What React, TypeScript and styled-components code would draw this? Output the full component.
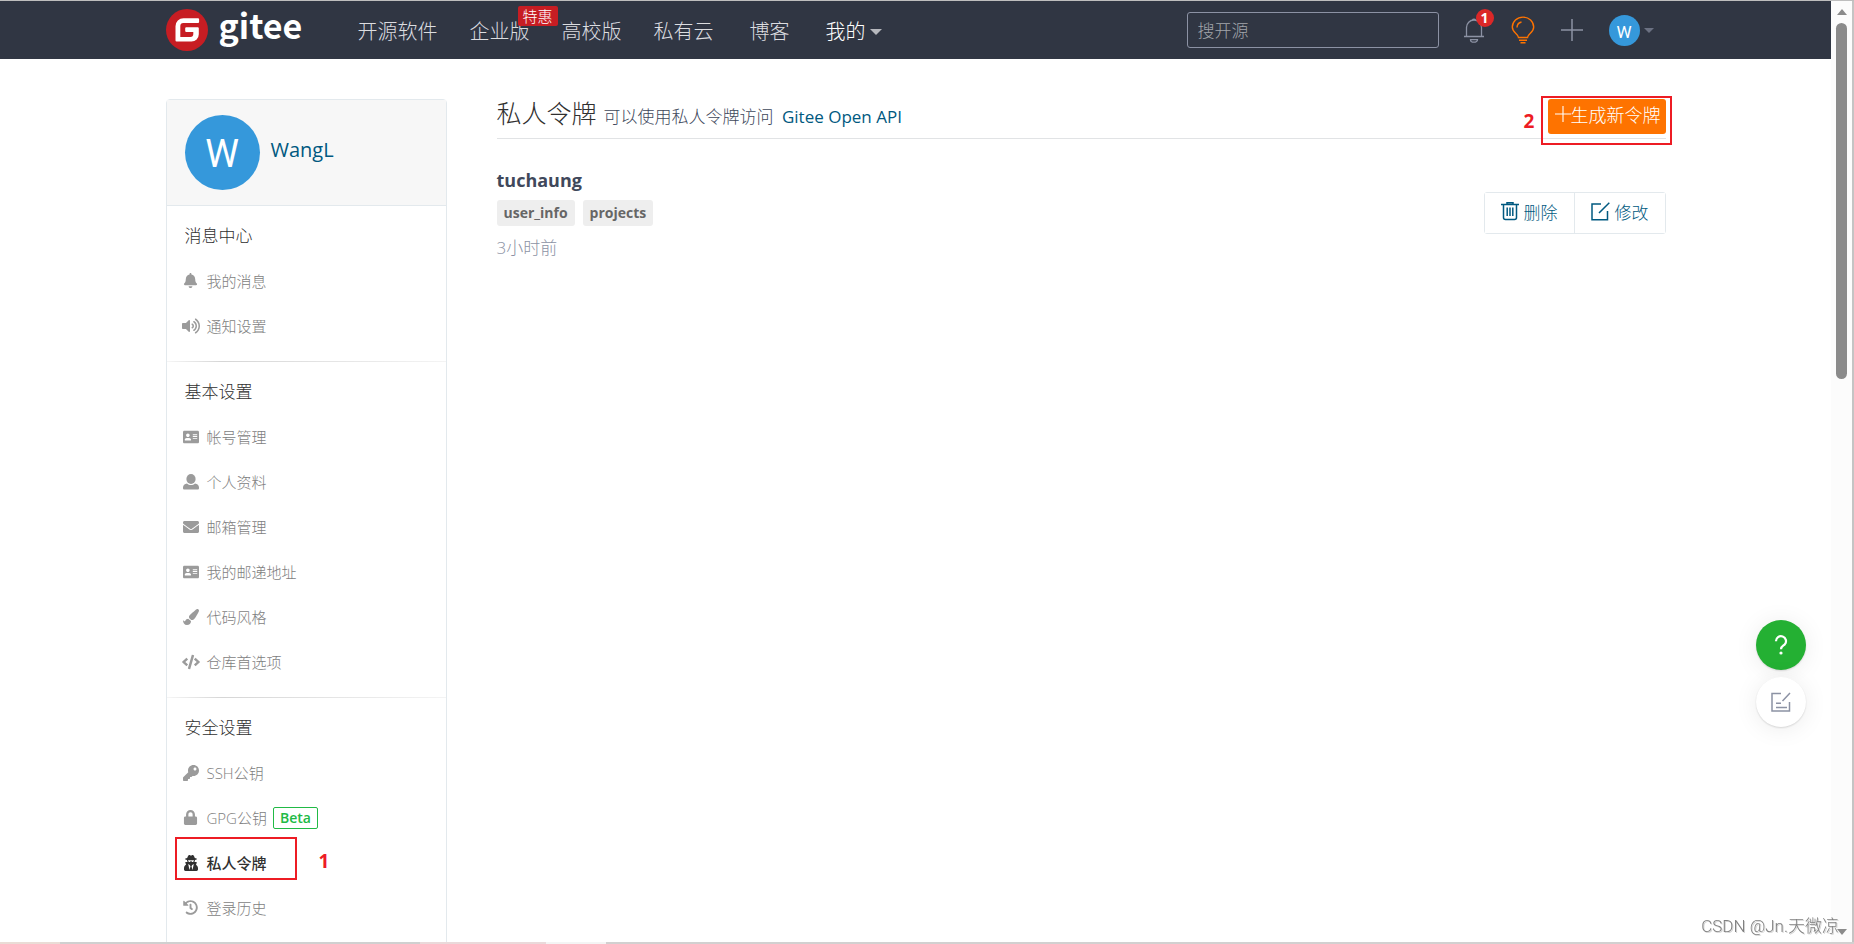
import React from 'react';
import styled, { createGlobalStyle } from 'styled-components';
import {
  FaAddressCard,
  FaBell,
  FaCode,
  FaEnvelope,
  FaHistory,
  FaKey,
  FaLock,
  FaPaintBrush,
  FaUserSecret,
  FaVolumeUp,
} from 'react-icons/fa';

const fontStack = "'Open Sans', 'Noto Sans CJK SC', sans-serif";

const GlobalStyle = createGlobalStyle`
  *, *::before, *::after { box-sizing: border-box; }
  body {
    margin: 0;
    background: #fff;
    color: #40485b;
    font-family: ${fontStack};
    font-size: 17px;
    font-weight: 300;
    overflow: hidden;
  }
  a { color: inherit; text-decoration: none; }
  button { font: inherit; cursor: pointer; }
  h1, h2, h3, p, ul { margin: 0; padding: 0; font-weight: inherit; }
  ul { list-style: none; }
`;

const Frame = styled.div`
  height: 100vh;
  display: flex;
  flex-direction: column;
  border-top: 1px solid #bebebe;
`;

const Viewport = styled.div`
  flex: 1;
  min-height: 0;
  display: flex;
`;

const Page = styled.div`
  flex: 1;
  min-width: 0;
  overflow: hidden;
`;

const Container = styled.div`
  max-width: 1500px;
  margin: 0 auto;
`;

const Header = styled.header`
  background: #303643;
`;

const HeaderRow = styled(Container)`
  display: flex;
  align-items: center;
  height: 58px;
`;

const Logo = styled.a`
  display: flex;
  align-items: center;
  gap: 11px;
  width: 192px;
  color: #fff;
  font-family: 'Noto Sans CJK SC', sans-serif;
  font-size: 34px;
  font-weight: 700;
  line-height: 50px;
`;

const LogoName = styled.span`
  padding-bottom: 10px;
`;

const Nav = styled.nav`
  flex: 1;
  display: flex;
  gap: 32px;
  padding-top: 3px;
`;

const NavLink = styled.a<{ $active?: boolean; $spaced?: boolean }>`
  position: relative;
  display: flex;
  align-items: center;
  gap: 4px;
  margin-left: ${(p) => (p.$spaced ? 4 : 0)}px;
  font-size: 20px;
  line-height: 30px;
  color: ${(p) => (p.$active ? '#fff' : '#dcdde0')};
`;

const Caret = styled.span<{ $size: number }>`
  border: ${(p) => p.$size}px solid transparent;
  border-top-color: currentColor;
  border-bottom: 0;
  opacity: 0.65;
`;

const Promo = styled.span`
  position: absolute;
  top: -11px;
  right: -28px;
  width: 40px;
  border-radius: 2px;
  background: #c71d23;
  color: #fff;
  font-size: 15px;
  line-height: 20px;
  text-align: center;
`;

const Search = styled.input`
  width: 252px;
  height: 36px;
  padding: 0 10px;
  border: 1px solid #8c92a4;
  border-radius: 3px;
  background: transparent;
  color: #fff;
  font: inherit;
  &::placeholder { color: #a2a5ab; opacity: 1; }
`;

const Tools = styled.div`
  display: flex;
  align-items: center;
  gap: 26px;
  margin-left: 24px;
  padding-right: 12px;
`;

const ToolButton = styled.button`
  position: relative;
  display: flex;
  align-items: center;
  gap: 4px;
  padding: 0;
  border: 0;
  background: none;
  color: #8c92a4;
`;

const Count = styled.span`
  position: absolute;
  top: -8px;
  right: -9px;
  width: 18px;
  height: 18px;
  border-radius: 50%;
  background: #db2828;
  color: #fff;
  font-size: 14px;
  font-weight: 700;
  line-height: 18px;
`;

const Avatar = styled.span<{ $size: number; $font: number }>`
  display: block;
  width: ${(p) => p.$size}px;
  height: ${(p) => p.$size}px;
  border-radius: 50%;
  background: #3598db;
  color: #fff;
  font-family: Roboto, 'Liberation Sans', sans-serif;
  font-size: ${(p) => p.$font}px;
  font-weight: 400;
  line-height: ${(p) => p.$size + 4}px;
  text-align: center;
`;

const Columns = styled(Container)`
  display: flex;
  align-items: flex-start;
  gap: 50px;
  padding-top: 40px;
`;

const Sidebar = styled.aside`
  width: 281px;
  min-height: 900px;
  border: 1px solid #e3e9ed;
  border-radius: 4px;
`;

const Profile = styled.div`
  display: flex;
  gap: 11px;
  padding: 15px 18px;
  border-bottom: 1px solid #e3e9ed;
  background: #f7f7f7;
`;

const ProfileName = styled.a`
  padding-top: 20px;
  color: #005980;
  font-size: 20px;
  font-weight: 400;
  line-height: 30px;
`;

const MenuSection = styled.section`
  padding: 7px 0 13px;
  & + & {
    border-top: 1px solid;
    border-image: linear-gradient(90deg, #f6f6f6, #d6d6d6 20%, #f4f4f4) 1;
  }
`;

const MenuTitle = styled.h2`
  padding-left: 18px;
  color: #303030;
  font-size: 17px;
  line-height: 45px;
`;

const MenuLink = styled.a<{ $active?: boolean }>`
  display: flex;
  align-items: center;
  height: 45px;
  padding-left: 14px;
  color: ${(p) => (p.$active ? '#303030' : '#7e7e7e')};
  font-size: 15px;
  font-weight: ${(p) => (p.$active ? 500 : 300)};
`;

const MenuIcon = styled.span<{ $active?: boolean }>`
  display: flex;
  justify-content: center;
  width: 20px;
  margin-right: 6px;
  color: ${(p) => (p.$active ? '#303030' : '#9b9b9b')};
`;

const Beta = styled.span`
  margin-left: 6px;
  padding: 0 6px;
  border: 1px solid #21ba45;
  border-radius: 2px;
  color: #21ba45;
  font-size: 14px;
  font-weight: 600;
  line-height: 20px;
`;

const Main = styled.main`
  flex: 1;
  min-width: 0;
`;

const TitleBar = styled.div`
  display: flex;
  align-items: flex-start;
  justify-content: space-between;
  height: 40px;
  border-bottom: 1px solid #e1e3e5;
`;

const Title = styled.h1`
  display: flex;
  align-items: baseline;
  gap: 7px;
  color: #303030;
  font-size: 25px;
  line-height: 28px;
`;

const Subtitle = styled.span`
  color: #40485b;
  font-size: 17px;
`;

const TextLink = styled.a`
  margin-left: 4px;
  color: #005980;
  font-weight: 400;
`;

const CreateButton = styled.button`
  display: flex;
  align-items: center;
  height: 35px;
  padding: 0 5px 6px 7px;
  border: 0;
  border-radius: 3px;
  background: #fe7300;
  color: #fff;
  font-size: 18px;
`;

const TokenRow = styled.article`
  display: flex;
  align-items: flex-start;
  justify-content: space-between;
  padding-top: 27px;
`;

const TokenName = styled.h3`
  color: #40485b;
  font-size: 18px;
  font-weight: 700;
  line-height: 28px;
`;

const Scopes = styled.ul`
  display: flex;
  gap: 8px;
  margin: 6px 0 8px;
`;

const Scope = styled.li`
  padding: 0 7px;
  border-radius: 3px;
  background: #eee;
  color: #666;
  font-size: 14px;
  font-weight: 700;
  line-height: 26px;
`;

const TokenTime = styled.p`
  color: #8c92a4;
  line-height: 28px;
`;

const Actions = styled.div`
  display: flex;
  margin-top: 26px;
  border: 1px solid #e3e9ed;
  border-radius: 3px;
`;

const ActionButton = styled.button`
  display: flex;
  align-items: center;
  gap: 5px;
  height: 40px;
  padding: 0 16px 4px;
  border: 0;
  background: #fff;
  color: #005980;
  & + & { border-left: 1px solid #e3e9ed; }
`;

const ScrollTrack = styled.div`
  display: flex;
  flex-direction: column;
  align-items: center;
  justify-content: space-between;
  width: 23px;
  padding: 8px 4px 7px 4px;
  border-right: 2px solid #c4c4c4;
  background: #fcfcfc;
`;

const ScrollTop = styled.div`
  display: flex;
  flex-direction: column;
  align-items: center;
  gap: 8px;
  height: 40%;
`;

const ScrollThumb = styled.div`
  flex: 1;
  width: 11px;
  border-radius: 6px;
  background: #8b8b8b;
`;

const ScrollArrow = styled.span<{ $down?: boolean }>`
  border: 5px solid transparent;
  border-top: ${(p) => (p.$down ? '6px solid #8b8b8b' : '0')};
  border-bottom: ${(p) => (p.$down ? '0' : '6px solid #8b8b8b')};
`;

const WindowEdge = styled.div`
  flex: none;
  display: grid;
  grid-template-columns: 60px 360px 126px 60px 1fr;
  height: 2px;
  background: #ccc;
`;

const EdgePart = styled.span<{ $color: string }>`
  background: ${(p) => p.$color};
`;

const Float = styled.div`
  position: fixed;
  right: 48px;
  bottom: 217px;
  display: flex;
  flex-direction: column;
  gap: 7px;
`;

const FloatButton = styled.button<{ $green?: boolean }>`
  display: flex;
  align-items: center;
  justify-content: center;
  width: 50px;
  height: 50px;
  border: 0;
  border-radius: 50%;
  background: ${(p) => (p.$green ? '#24b033' : '#fff')};
  color: ${(p) => (p.$green ? '#fff' : '#8c92a4')};
  box-shadow: 0 1px 2px rgba(0, 0, 0, 0.14), 0 2px 24px rgba(0, 0, 0, 0.08);
`;

const Watermark = styled.div`
  position: fixed;
  right: 15px;
  bottom: 4px;
  color: #808080;
  font-family: Roboto, 'Noto Sans CJK SC', sans-serif;
  font-size: 17px;
  line-height: 28px;
  text-shadow: 1px 1px 0 #d4d4d4;
`;

const Outline = styled.span<{ $top: number; $left: number; $width: number; $height: number }>`
  position: absolute;
  top: ${(p) => p.$top}px;
  left: ${(p) => p.$left}px;
  width: ${(p) => p.$width}px;
  height: ${(p) => p.$height}px;
  border: 2px solid #ed1c24;
  pointer-events: none;
`;

const Marker = styled.span<{ $top: number; $left: number }>`
  position: absolute;
  top: ${(p) => p.$top}px;
  left: ${(p) => p.$left}px;
  color: #ed1c24;
  font-size: 19px;
  font-weight: 700;
  line-height: 26px;
  pointer-events: none;
`;

const Marked = styled.div`
  position: relative;
`;

const LogoMark = () => (
  <svg width="42" height="42" viewBox="0 0 42 42" aria-hidden="true">
    <circle cx="21" cy="21" r="21" fill="#c71d23" />
    <path
      d="M32 9.2H17.5A8 8 0 0 0 9.5 17.2V31.5a1.1 1.1 0 0 0 1.1 1.1H25.5A7.3 7.3 0 0 0 32.8 25.3V19.3a1.1 1.1 0 0 0-1.1-1.1H20.3a1.1 1.1 0 0 0-1.1 1.1v2.6a1.1 1.1 0 0 0 1.1 1.1H27.3v1.9a3 3 0 0 1-3 3H14.3V17a3 3 0 0 1 3-3H32a1.1 1.1 0 0 0 1.1-1.1v-2.6A1.1 1.1 0 0 0 32 9.2Z"
      fill="#fff"
    />
  </svg>
);

const BellIcon = () => (
  <svg width="22" height="26" viewBox="0 0 22 26" fill="none" stroke="currentColor" strokeWidth="1.3" aria-hidden="true">
    <path d="M1 19.5h20M3.5 19.5v-9a7.5 7.5 0 0 1 15 0v9M9.3 3a2 2 0 0 1 3.4 0M7.5 22.7h7a3.5 2.5 0 0 1-7 0Z" />
  </svg>
);

const BulbIcon = () => (
  <svg width="24" height="28" viewBox="0 0 24 28" fill="none" stroke="#fe7300" strokeWidth="1.4" aria-hidden="true">
    <path d="M7.5 21.5C7.5 17.5 1.3 17 1.3 11A10.7 9.9 0 0 1 22.7 11C22.7 17 16.5 17.5 16.5 21.5Z" />
    <path d="M8 24.2h8M9.5 26.8h5M6 11.5A5.8 5.8 0 0 1 10.5 6" />
  </svg>
);

const PlusIcon = ({ size }: { size: number }) => (
  <svg width={size} height={size} viewBox="0 0 22 22" stroke="currentColor" strokeWidth="1.5" aria-hidden="true">
    <path d="M0 11h22M11 0v22" />
  </svg>
);

const TrashIcon = () => (
  <svg width="18" height="19" viewBox="0 0 18 19" fill="none" stroke="currentColor" strokeWidth="1.5" aria-hidden="true">
    <path d="M0 2.5h18M6 2V.8h6V2M2.5 2.5V15.5a2 2 0 0 0 2 2h9a2 2 0 0 0 2-2V2.5M6.2 5.5v8.5M9 5.5v8.5M11.8 5.5v8.5" />
  </svg>
);

const EditIcon = () => (
  <svg width="19" height="19" viewBox="0 0 19 19" fill="none" stroke="currentColor" strokeWidth="1.5" aria-hidden="true">
    <path d="M10 2H1v15.8h15.5V9M8 11 18.3.8" />
  </svg>
);

const FeedbackIcon = () => (
  <svg width="20" height="20" viewBox="0 0 20 20" fill="none" stroke="currentColor" strokeWidth="1.5" aria-hidden="true">
    <path d="M10 1.5H1v17.5h17.5V10M11.5 9 19 1M5 11.2h5M5 15.5h11" />
  </svg>
);

const QuestionIcon = () => (
  <svg width="14" height="20" viewBox="0 0 14 20" fill="none" stroke="currentColor" strokeWidth="2.2" aria-hidden="true">
    <path d="M2 6.3a5 5 0 1 1 8.8 3.1C9 11 7 11.5 7 14.2" />
    <circle cx="7" cy="18" r="1.6" fill="currentColor" stroke="none" />
  </svg>
);

const UserIcon = ({ size }: { size: number }) => (
  <svg width={size} height={size} viewBox="0 0 16 16" fill="currentColor" aria-hidden="true">
    <ellipse cx="8" cy="5" rx="4.6" ry="5" />
    <path d="M4 9.5c2.3 2 5.7 2 8 0 2.4.5 4 1.8 4 4v.7c0 .8-.6 1.3-1.3 1.3H1.3C.6 15.500 0 15 0 14.2v-.7c0-2.2 1.6-3.5 4-4Z" />
  </svg>
);

type Item = {
  label: string;
  icon: React.ComponentType<{ size: number }>;
  size?: number;
  beta?: boolean;
  active?: boolean;
};

const sections: { title: string; items: Item[] }[] = [
  {
    title: '消息中心',
    items: [
      { label: '我的消息', icon: FaBell, size: 15 },
      { label: '通知设置', icon: FaVolumeUp, size: 18 },
    ],
  },
  {
    title: '基本设置',
    items: [
      { label: '帐号管理', icon: FaAddressCard },
      { label: '个人资料', icon: UserIcon },
      { label: '邮箱管理', icon: FaEnvelope },
      { label: '我的邮递地址', icon: FaAddressCard },
      { label: '代码风格', icon: FaPaintBrush },
      { label: '仓库首选项', icon: FaCode, size: 18 },
    ],
  },
  {
    title: '安全设置',
    items: [
      { label: 'SSH公钥', icon: FaKey },
      { label: 'GPG公钥', icon: FaLock, size: 15, beta: true },
      { label: '私人令牌', icon: FaUserSecret, active: true },
      { label: '登录历史', icon: FaHistory, size: 15 },
    ],
  },
];

const MenuItem = ({ label, icon: Icon, size = 16, beta, active }: Item) => (
  <li>
    <Marked>
      <MenuLink href="#" $active={active}>
        <MenuIcon $active={active}>
          <Icon size={size} />
        </MenuIcon>
        {label}
        {beta && <Beta>Beta</Beta>}
      </MenuLink>
      {active && (
        <>
          <Outline $top={-3} $left={8} $width={122} $height={43} />
          <Marker $top={8} $left={152}>1</Marker>
        </>
      )}
    </Marked>
  </li>
);

export default function App() {
  return (
    <Frame>
      <GlobalStyle />
      <Viewport>
        <Page>
          <Header>
            <HeaderRow>
              <Logo href="#">
                <LogoMark />
                <LogoName>gitee</LogoName>
              </Logo>
              <Nav>
                <NavLink href="#">开源软件</NavLink>
                <NavLink href="#">
                  企业版<Promo>特惠</Promo>
                </NavLink>
                <NavLink href="#">高校版</NavLink>
                <NavLink href="#">私有云</NavLink>
                <NavLink href="#" $spaced>博客</NavLink>
                <NavLink href="#" $active $spaced>
                  我的
                  <Caret $size={6} />
                </NavLink>
              </Nav>
              <Search type="search" placeholder="搜开源" aria-label="搜开源" />
              <Tools>
                <ToolButton aria-label="通知">
                  <BellIcon />
                  <Count>1</Count>
                </ToolButton>
                <ToolButton aria-label="动态">
                  <BulbIcon />
                </ToolButton>
                <ToolButton aria-label="新建">
                  <PlusIcon size={22} />
                </ToolButton>
                <ToolButton aria-label="账户">
                  <Avatar $size={31} $font={17}>W</Avatar>
                  <Caret $size={5} />
                </ToolButton>
              </Tools>
            </HeaderRow>
          </Header>
          <Columns>
            <Sidebar>
              <Profile>
                <Avatar $size={75} $font={38}>W</Avatar>
                <ProfileName href="#">WangL</ProfileName>
              </Profile>
              {sections.map((section) => (
                <MenuSection key={section.title}>
                  <MenuTitle>{section.title}</MenuTitle>
                  <ul>
                    {section.items.map((item) => (
                      <MenuItem key={item.label} {...item} />
                    ))}
                  </ul>
                </MenuSection>
              ))}
            </Sidebar>
            <Main>
              <TitleBar>
                <Title>
                  私人令牌
                  <Subtitle>
                    可以使用私人令牌访问 <TextLink href="#">Gitee Open API</TextLink>
                  </Subtitle>
                </Title>
                <Marked>
                  <CreateButton>
                    <PlusIcon size={16} />
                    生成新令牌
                  </CreateButton>
                  <Outline $top={-3} $left={-7} $width={131} $height={49} />
                  <Marker $top={9} $left={-24}>2</Marker>
                </Marked>
              </TitleBar>
              <TokenRow>
                <div>
                  <TokenName>tuchaung</TokenName>
                  <Scopes>
                    <Scope>user_info</Scope>
                    <Scope>projects</Scope>
                  </Scopes>
                  <TokenTime>3小时前</TokenTime>
                </div>
                <Actions>
                  <ActionButton>
                    <TrashIcon />
                    删除
                  </ActionButton>
                  <ActionButton>
                    <EditIcon />
                    修改
                  </ActionButton>
                </Actions>
              </TokenRow>
            </Main>
          </Columns>
        </Page>
        <ScrollTrack aria-hidden="true">
          <ScrollTop>
            <ScrollArrow />
            <ScrollThumb />
          </ScrollTop>
          <ScrollArrow $down />
        </ScrollTrack>
      </Viewport>
      <WindowEdge>
        <EdgePart $color="#eadcd6" />
        <EdgePart $color="#d0d0d0" />
        <EdgePart $color="#ead9da" />
        <EdgePart $color="#f4f4f4" />
        <EdgePart $color="#d2d0d0" />
      </WindowEdge>
      <Float>
        <FloatButton $green aria-label="帮助">
          <QuestionIcon />
        </FloatButton>
        <FloatButton aria-label="反馈">
          <FeedbackIcon />
        </FloatButton>
      </Float>
      <Watermark>CSDN @Jn.天微凉</Watermark>
    </Frame>
  );
}
